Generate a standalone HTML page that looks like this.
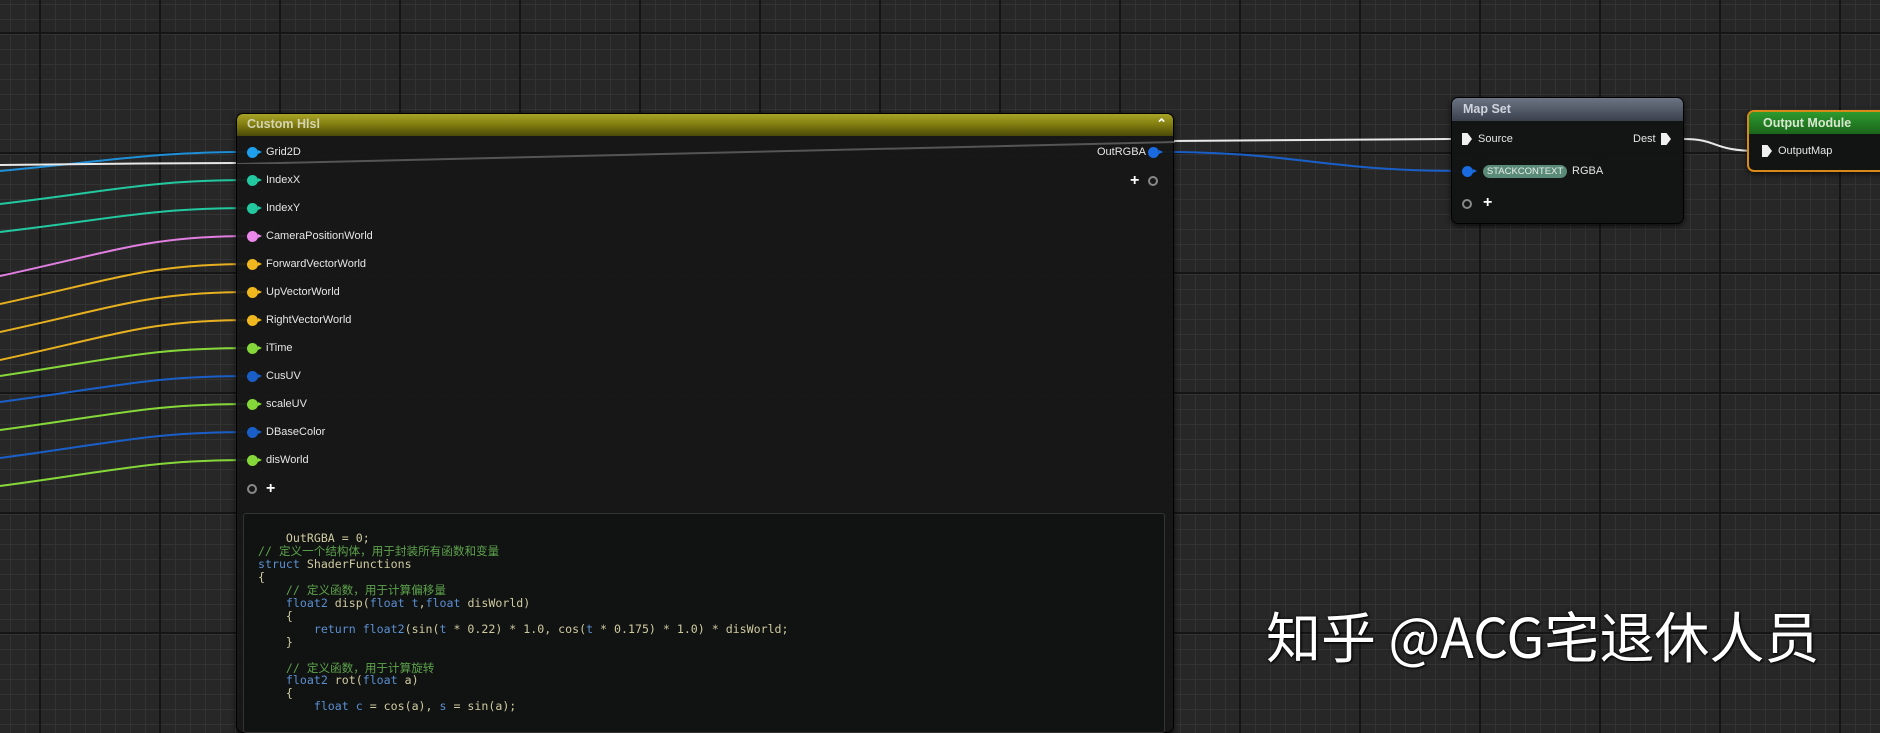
<!DOCTYPE html>
<html><head><meta charset="utf-8"><style>
*{margin:0;padding:0;box-sizing:border-box}
body{width:1880px;height:715px;overflow:hidden;position:relative;font-family:"Liberation Sans","Noto Sans CJK SC",sans-serif;
background-color:#272727;
background-image:
linear-gradient(90deg,#151515 2px,transparent 2px),
linear-gradient(0deg,#151515 2px,transparent 2px),
linear-gradient(90deg,#333 1px,transparent 1px),
linear-gradient(0deg,#333 1px,transparent 1px);
background-size:120px 120px,120px 120px,15px 15px,15px 15px;
background-position:39px 0,0 34px,10px 0,0 5px;}
svg.w{position:absolute;left:0;top:0}
.node{position:absolute;border-radius:7px;box-shadow:0 2px 6px rgba(0,0,0,.7)}
.lbl{position:absolute;color:#e6e6e6;font-size:11px;white-space:nowrap;line-height:14px}
.pin{position:absolute;width:11px;height:11px;border-radius:50%}
.pin:after{content:"";position:absolute;right:-4px;top:3px;border-left:4px solid currentColor;border-top:2.5px solid transparent;border-bottom:2.5px solid transparent}
.exec{position:absolute;width:10px;height:12px;background:#f0f0f0;clip-path:polygon(0 0,55% 0,100% 50%,55% 100%,0 100%)}
.plus{position:absolute;color:#fff;font-size:16px;font-weight:bold;line-height:14px}
.opin{position:absolute;width:10px;height:10px;border-radius:50%;border:2px solid #888}
pre{font-family:"DejaVu Sans Mono","Liberation Mono","Noto Sans CJK SC",monospace;font-size:11.6px;line-height:12.95px;color:#cfcba0}
.c{color:#5da34c}.k{color:#5a8fd0}
</style></head><body>
<svg class="w" width="1880" height="715">
<g fill="none" stroke-width="2">
<path d="M0 171 C120 160 150 152 252 152" stroke="#1f8fd8"/>
<path d="M0 165 C100 164 150 163 236 163" stroke="#e8e8e8"/>
<path d="M0 204 C120 190 150 180 252 180" stroke="#22c9a0"/>
<path d="M0 232 C120 218 150 208 252 208" stroke="#22c9a0"/>
<path d="M0 276 C120 250 150 236 252 236" stroke="#e07ee0"/>
<path d="M0 304 C120 278 150 264 252 264" stroke="#e6b020"/>
<path d="M0 332 C120 306 150 292 252 292" stroke="#e6b020"/>
<path d="M0 360 C120 334 150 320 252 320" stroke="#e6b020"/>
<path d="M0 376 C120 358 150 348 252 348" stroke="#86d83a"/>
<path d="M0 402 C120 386 150 376 252 376" stroke="#1a5fc8"/>
<path d="M0 430 C120 414 150 404 252 404" stroke="#86d83a"/>
<path d="M0 458 C120 442 150 432 252 432" stroke="#1a5fc8"/>
<path d="M0 486 C120 470 150 460 252 460" stroke="#86d83a"/>
<path d="M1174 141 L1451 139" stroke="#e8e8e8"/>
<path d="M1160 152 C1300 152 1320 171 1465 171" stroke="#1a5fc8"/>
<path d="M1683 139 C1720 139 1710 151 1760 151" stroke="#e8e8e8"/>
</g></svg>

<div class="node" style="left:236px;top:113px;width:938px;height:620px;background:rgba(22,23,22,.93);border:1px solid #000">
<div style="height:22px;border-radius:6px 6px 0 0;background:linear-gradient(180deg,#a8a428 0%,#848010 45%,#4a4808 100%)"></div>
<div style="position:absolute;left:10px;top:3px;color:#d4d4b0;font-weight:bold;font-size:12.5px">Custom Hlsl</div>
<div style="position:absolute;right:6px;top:2px;color:#fff;font-size:13px;font-weight:bold">&#8963;</div>
<svg width="938" height="30" style="position:absolute;left:0;top:20px"><path d="M0 30 L938 8" stroke="rgba(200,200,200,.35)" stroke-width="2"/></svg>
</div>
<div class="pin" style="left:247px;top:147px;background:#1ea0ee;color:#1ea0ee"></div><div class="lbl" style="left:266px;top:145px">Grid2D</div>
<div class="pin" style="left:247px;top:175px;background:#22c9a0;color:#22c9a0"></div><div class="lbl" style="left:266px;top:173px">IndexX</div>
<div class="pin" style="left:247px;top:203px;background:#22c9a0;color:#22c9a0"></div><div class="lbl" style="left:266px;top:201px">IndexY</div>
<div class="pin" style="left:247px;top:231px;background:#ec88ec;color:#ec88ec"></div><div class="lbl" style="left:266px;top:229px">CameraPositionWorld</div>
<div class="pin" style="left:247px;top:259px;background:#f0b81e;color:#f0b81e"></div><div class="lbl" style="left:266px;top:257px">ForwardVectorWorld</div>
<div class="pin" style="left:247px;top:287px;background:#f0b81e;color:#f0b81e"></div><div class="lbl" style="left:266px;top:285px">UpVectorWorld</div>
<div class="pin" style="left:247px;top:315px;background:#f0b81e;color:#f0b81e"></div><div class="lbl" style="left:266px;top:313px">RightVectorWorld</div>
<div class="pin" style="left:247px;top:343px;background:#86d83a;color:#86d83a"></div><div class="lbl" style="left:266px;top:341px">iTime</div>
<div class="pin" style="left:247px;top:371px;background:#1a5fc8;color:#1a5fc8"></div><div class="lbl" style="left:266px;top:369px">CusUV</div>
<div class="pin" style="left:247px;top:399px;background:#86d83a;color:#86d83a"></div><div class="lbl" style="left:266px;top:397px">scaleUV</div>
<div class="pin" style="left:247px;top:427px;background:#1a5fc8;color:#1a5fc8"></div><div class="lbl" style="left:266px;top:425px">DBaseColor</div>
<div class="pin" style="left:247px;top:455px;background:#86d83a;color:#86d83a"></div><div class="lbl" style="left:266px;top:453px">disWorld</div>
<div class="opin" style="left:247px;top:484px"></div><div class="plus" style="left:266px;top:482px">+</div>
<div class="lbl" style="left:1097px;top:145px">OutRGBA</div><div class="pin" style="left:1148px;top:147px;background:#1a6ae0;color:#1a6ae0"></div>
<div class="plus" style="left:1130px;top:174px">+</div><div class="opin" style="left:1148px;top:176px"></div>

<div style="position:absolute;left:243px;top:513px;width:922px;height:220px;background:#111212;border:1px solid #333;border-radius:3px">
<pre style="position:absolute;left:14px;top:18px">    OutRGBA = 0;
<span class="c">// 定义一个结构体，用于封装所有函数和变量</span>
<span class="k">struct</span> ShaderFunctions
{
    <span class="c">// 定义函数，用于计算偏移量</span>
    <span class="k">float2</span> disp(<span class="k">float t</span>,<span class="k">float</span> disWorld)
    {
        <span class="k">return float2</span>(sin(<span class="k">t</span> * 0.22) * 1.0, cos(<span class="k">t</span> * 0.175) * 1.0) * disWorld;
    }

    <span class="c">// 定义函数，用于计算旋转</span>
    <span class="k">float2</span> rot(<span class="k">float</span> a)
    {
        <span class="k">float c</span> = cos(a), <span class="k">s</span> = sin(a);</pre>
</div>

<div class="node" style="left:1451px;top:97px;width:233px;height:127px;background:rgba(18,19,19,.95);border:1px solid #000">
<div style="height:23px;border-radius:6px 6px 0 0;background:linear-gradient(180deg,#6c7484,#3a404c)"></div>
<div style="position:absolute;left:11px;top:4px;color:#d0d4dc;font-weight:bold;font-size:12.5px">Map Set</div>
</div>
<div class="exec" style="left:1462px;top:133px"></div><div class="lbl" style="left:1478px;top:132px">Source</div>
<div class="lbl" style="left:1633px;top:132px">Dest</div><div class="exec" style="left:1661px;top:133px"></div>
<div class="pin" style="left:1462px;top:166px;background:#1a6ae0;color:#1a6ae0"></div>
<div style="position:absolute;left:1483px;top:165px;width:84px;height:13px;border-radius:7px;background:#5a8a78;color:#e8f0ec;font-size:9.5px;line-height:13px;text-align:center">STACKCONTEXT</div>
<div class="lbl" style="left:1572px;top:164px">RGBA</div>
<div class="opin" style="left:1462px;top:199px"></div><div class="plus" style="left:1483px;top:196px">+</div>

<div class="node" style="left:1747px;top:110px;width:140px;height:62px;background:#121313;border:2px solid #d88a18">
<div style="height:22px;border-radius:5px 5px 0 0;background:linear-gradient(180deg,#2e9a2e,#1a641a)"></div>
<div style="position:absolute;left:14px;top:4px;color:#d8e8d0;font-weight:bold;font-size:12.5px">Output Module</div>
</div>
<div class="exec" style="left:1762px;top:145px"></div><div class="lbl" style="left:1778px;top:144px">OutputMap</div>

<div style="position:absolute;left:1266px;top:600px;color:#fff;font-size:55px;line-height:68px;white-space:nowrap;font-family:'Noto Sans CJK SC','Liberation Sans',sans-serif;text-shadow:0 0 3px rgba(0,0,0,.8),1px 1px 2px #000">知乎 @ACG宅退休人员</div>
</body></html>
